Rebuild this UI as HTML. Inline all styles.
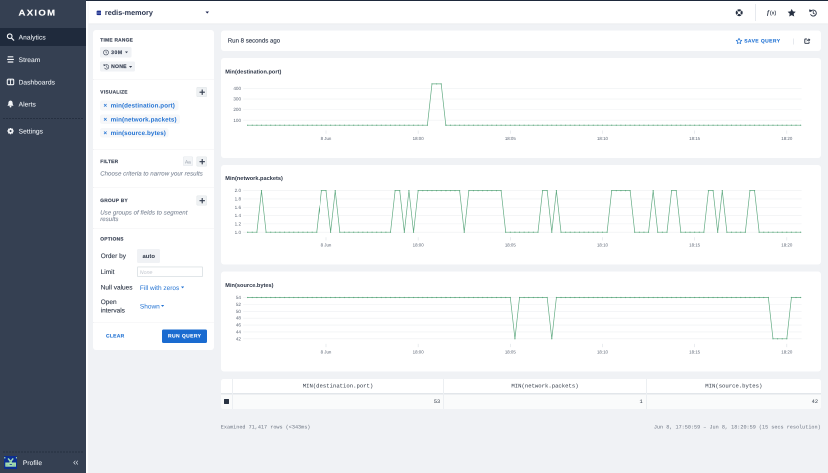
<!DOCTYPE html>
<html lang="en"><head><meta charset="utf-8"><title>Axiom - Analytics</title>
<style>
html,body{margin:0;padding:0}
body{width:828px;height:473px;position:relative;overflow:hidden;background:#f0f2f5;font-family:"Liberation Sans",Arial,sans-serif;-webkit-font-smoothing:antialiased;text-rendering:geometricPrecision}
.b{position:absolute;display:block;box-sizing:border-box}
.t{position:absolute;white-space:nowrap;line-height:1;display:block}
#w{position:absolute;left:0;top:0;width:828px;height:473px;zoom:2;transform:scale(0.5);transform-origin:0 0;will-change:transform}
</style></head><body><div id="w">
<div class="b" style="left:0.00px;top:0.00px;width:86.00px;height:473.00px;background:#354052;border-radius:0px;"></div>
<div class="b" style="left:0.00px;top:28.00px;width:86.00px;height:18.00px;background:#1f2a3c;border-radius:0px;"></div>
<span class="t" style="top:9.03px;font-size:8.3px;font-weight:700;color:#ffffff;font-family:'Liberation Sans',Arial,sans-serif;letter-spacing:1.15px;left:18.30px;transform:scaleX(1.15);transform-origin:0 50%;-webkit-text-stroke:0.15px #fff;">AXIOM</span>
<span class="t" style="top:34.00px;font-size:6.6px;font-weight:400;color:#e6eaef;font-family:'Liberation Sans',Arial,sans-serif;letter-spacing:0.08px;left:18.60px;-webkit-text-stroke:0.08px #e6eaef;">Analytics</span>
<span class="t" style="top:56.30px;font-size:6.6px;font-weight:400;color:#e6eaef;font-family:'Liberation Sans',Arial,sans-serif;letter-spacing:0.08px;left:18.60px;-webkit-text-stroke:0.08px #e6eaef;">Stream</span>
<span class="t" style="top:78.90px;font-size:6.6px;font-weight:400;color:#e6eaef;font-family:'Liberation Sans',Arial,sans-serif;letter-spacing:0.08px;left:18.60px;-webkit-text-stroke:0.08px #e6eaef;">Dashboards</span>
<span class="t" style="top:101.20px;font-size:6.6px;font-weight:400;color:#e6eaef;font-family:'Liberation Sans',Arial,sans-serif;letter-spacing:0.08px;left:18.60px;-webkit-text-stroke:0.08px #e6eaef;">Alerts</span>
<span class="t" style="top:128.20px;font-size:6.6px;font-weight:400;color:#e6eaef;font-family:'Liberation Sans',Arial,sans-serif;letter-spacing:0.08px;left:18.60px;-webkit-text-stroke:0.08px #e6eaef;">Settings</span>
<svg class="b" style="left:6.50px;top:33.00px" width="8" height="8" viewBox="0 0 8 8"><circle cx="3.2" cy="3.2" r="2.3" fill="none" stroke="#f2f4f7" stroke-width="1.1"/><path d="M4.9 4.9L7.2 7.2" stroke="#f2f4f7" stroke-width="1.2" stroke-linecap="round"/></svg>
<svg class="b" style="left:6.50px;top:55.30px" width="8" height="8" viewBox="0 0 8 8"><path d="M1.2 1.3H6.8M0.6 3.9H7.4M1.2 6.5H6.8" stroke="#f2f4f7" stroke-width="1.15"/></svg>
<svg class="b" style="left:6.50px;top:77.90px" width="8" height="8" viewBox="0 0 8 8"><rect x="0.8" y="1.2" width="6.4" height="5.5" rx="1" fill="none" stroke="#f2f4f7" stroke-width="1.05"/><path d="M4 1.2V6.7" stroke="#f2f4f7" stroke-width="0.9"/><path d="M0.8 2.2H7.2" stroke="#f2f4f7" stroke-width="0.5" opacity="0.6"/></svg>
<svg class="b" style="left:6.50px;top:100.20px" width="8" height="8" viewBox="0 0 8 8"><path d="M4 0.6C2.5 0.6 1.9 1.8 1.9 3.1C1.9 4.6 1.2 5.2 0.9 5.7H7.1C6.8 5.2 6.1 4.6 6.1 3.1C6.1 1.8 5.5 0.6 4 0.6Z" fill="#f2f4f7"/><circle cx="4" cy="6.6" r="0.9" fill="#f2f4f7"/></svg>
<svg class="b" style="left:7.00px;top:127.70px" width="7.1" height="7.1" viewBox="0 0 8 8"><rect x="3.15" y="0.45" width="1.7" height="7.1" rx="0.35" transform="rotate(0 4 4)" fill="#f2f4f7"/><rect x="3.15" y="0.45" width="1.7" height="7.1" rx="0.35" transform="rotate(45 4 4)" fill="#f2f4f7"/><rect x="3.15" y="0.45" width="1.7" height="7.1" rx="0.35" transform="rotate(90 4 4)" fill="#f2f4f7"/><rect x="3.15" y="0.45" width="1.7" height="7.1" rx="0.35" transform="rotate(135 4 4)" fill="#f2f4f7"/><circle cx="4" cy="4" r="2.85" fill="#f2f4f7"/><circle cx="4" cy="4" r="1.2" fill="#354052"/></svg>
<div class="b" style="left:3px;top:117.9px;width:80px;height:1px;background:repeating-linear-gradient(90deg,#182130 0,#182130 0.75px,transparent 0.75px,transparent 1.5px)"></div>
<div class="b" style="left:3px;top:451.5px;width:80px;height:1px;background:repeating-linear-gradient(90deg,#182130 0,#182130 0.75px,transparent 0.75px,transparent 1.5px)"></div>
<svg class="b" style="left:3.90px;top:455.90px" width="13.3" height="13" viewBox="0 0 13.3 13"><rect width="13.3" height="13" rx="0.7" fill="#0d2f91"/><rect x="0.1" y="1.1" width="1.3" height="1.3" fill="#a6ddb0"/><rect x="11.9" y="1.1" width="1.3" height="1.3" fill="#a6ddb0"/><path d="M4.1 2.4L6.3 5.2M9.2 2.4L7.0 5.2" stroke="#a6ddb0" stroke-width="1.5"/><rect x="5.5" y="4.4" width="2.3" height="2.6" fill="#a6ddb0"/><rect x="1.3" y="6.5" width="10.7" height="4.2" fill="#a6ddb0"/><rect x="5.6" y="8.2" width="2.5" height="0.8" rx="0.3" fill="#0d2f91"/><path d="M2.3 8.2H4.6M8.9 8.2H11.2M2.3 9.4H4.6M8.9 9.4H11.2" stroke="#6fb58c" stroke-width="0.5" stroke-dasharray="0.6 0.5"/><rect x="6.3" y="5.2" width="0.7" height="0.7" fill="#5fae86"/></svg>
<span class="t" style="top:459.30px;font-size:6.6px;font-weight:400;color:#e6eaef;font-family:'Liberation Sans',Arial,sans-serif;letter-spacing:0.08px;left:22.90px;-webkit-text-stroke:0.08px #e6eaef;">Profile</span>
<svg class="b" style="left:72.90px;top:460.00px" width="6" height="5.4" viewBox="0 0 6 5.4"><path d="M2.4 0.7L0.7 2.6L2.4 4.5M4.9 0.7L3.2 2.6L4.9 4.5" fill="none" stroke="#d5dbe3" stroke-width="0.7"/></svg>
<div class="b" style="left:86.00px;top:0.00px;width:742.00px;height:1.00px;background:#1f2a3c;border-radius:0px;"></div>
<div class="b" style="left:86.00px;top:1.00px;width:742.00px;height:22.60px;background:#ffffff;border-radius:0px;box-shadow:0 0.5px 1px rgba(0,0,0,0.06);"></div>
<div class="b" style="left:86px;top:1px;width:2.6px;height:472px;background:linear-gradient(90deg,#ffffff 0,#ffffff 55%,#f0f2f5 100%)"></div>
<svg class="b" style="left:96.40px;top:10.50px" width="4.8" height="4.8" viewBox="0 0 4.8 4.8"><rect x="0.1" y="0.1" width="4.6" height="4.5" rx="1" fill="#1c2f8c"/><path d="M0.1 1.7H4.7M0.1 3.1H4.7" stroke="#8f9bd0" stroke-width="0.45"/></svg>
<span class="t" style="top:9.51px;font-size:7.25px;font-weight:700;color:#2a3550;font-family:'Liberation Sans',Arial,sans-serif;left:104.90px;">redis-memory</span>
<svg class="b" style="left:205.25px;top:11.35px" width="3.5" height="2.275" viewBox="0 0 3.5 2.275"><path d="M0 0H3.5L1.75 2.1Z" fill="#1c2450"/></svg>
<svg class="b" style="left:735.70px;top:9.00px" width="7.4" height="7.4" viewBox="0 0 7.4 7.4"><circle cx="3.7" cy="3.7" r="2.45" fill="none" stroke="#263042" stroke-width="2.1"/><path d="M1.2 1.2L2.6 2.6M6.2 1.2L4.8 2.6M1.2 6.2L2.6 4.8M6.2 6.2L4.8 4.8" stroke="#fff" stroke-width="0.75"/></svg>
<div class="b" style="left:755.20px;top:4.00px;width:0.70px;height:17.00px;background:#e6e9ee;border-radius:0px;"></div>
<span class="t" style="left:767px;top:9.3px;font-size:6.4px;color:#263042;font-family:'Liberation Serif',serif;font-style:italic;font-weight:700">f</span>
<span class="t" style="top:10.68px;font-size:5.3px;font-weight:400;color:#263042;font-family:'Liberation Sans',Arial,sans-serif;letter-spacing:0.1px;left:769.90px;-webkit-text-stroke:0.12px #263042;">(x)</span>
<svg class="b" style="left:787.50px;top:8.40px" width="8.4" height="8.4" viewBox="0 0 8 8"><path d="M4 0.3L5.15 2.75L7.85 3.1L5.85 4.95L6.4 7.6L4 6.3L1.6 7.6L2.15 4.95L0.15 3.1L2.85 2.75Z" fill="#263042"/></svg>
<svg class="b" style="left:808.30px;top:8.30px" width="8.6" height="8.6" viewBox="0 0 10 10"><path d="M2.63 3.45A3.5 3.5 0 1 1 2.57 7.05" fill="none" stroke="#263042" stroke-width="1.1" stroke-linecap="round"/><path d="M0.6 1.2L3.7 1.7L1.3 4.3Z" fill="#263042"/><path d="M5.5 3.3V5.4L6.9 6.3" fill="none" stroke="#263042" stroke-width="0.935" stroke-linecap="round"/></svg>
<div class="b" style="left:93.10px;top:30.00px;width:120.80px;height:319.90px;background:#ffffff;border-radius:3px;"></div>
<span class="t" style="top:38.10px;font-size:4.8px;font-weight:700;color:#3a4355;font-family:'Liberation Sans',Arial,sans-serif;letter-spacing:0.27px;left:100.30px;-webkit-text-stroke:0.14px #3a4355;">TIME RANGE</span>
<div class="b" style="left:100.10px;top:46.90px;width:31.40px;height:10.80px;background:#f0f2f5;border-radius:1.6px;"></div>
<svg class="b" style="left:102.90px;top:49.40px" width="6" height="6" viewBox="0 0 6 6"><circle cx="3" cy="3" r="2.45" fill="none" stroke="#3a4355" stroke-width="0.6"/><path d="M3 1.6V3.1L3.9 3.7" fill="none" stroke="#3a4355" stroke-width="0.55"/></svg>
<span class="t" style="top:50.35px;font-size:5.1px;font-weight:700;color:#3a4355;font-family:'Liberation Sans',Arial,sans-serif;letter-spacing:0.55px;left:111.10px;-webkit-text-stroke:0.14px #3a4355;">30M</span>
<svg class="b" style="left:125.00px;top:51.60px" width="3.0" height="1.9500000000000002" viewBox="0 0 3.0 1.9500000000000002"><path d="M0 0H3.0L1.5 1.7999999999999998Z" fill="#3a4355"/></svg>
<div class="b" style="left:100.10px;top:61.70px;width:34.90px;height:9.80px;background:#f0f2f5;border-radius:1.6px;"></div>
<svg class="b" style="left:102.90px;top:63.50px" width="6.4" height="6.4" viewBox="0 0 10 10"><path d="M2.63 3.45A3.5 3.5 0 1 1 2.57 7.05" fill="none" stroke="#3a4355" stroke-width="0.95" stroke-linecap="round"/><path d="M0.6 1.2L3.7 1.7L1.3 4.3Z" fill="#3a4355"/><path d="M5.5 3.3V5.4L6.9 6.3" fill="none" stroke="#3a4355" stroke-width="0.8075" stroke-linecap="round"/></svg>
<span class="t" style="top:64.65px;font-size:5.1px;font-weight:700;color:#3a4355;font-family:'Liberation Sans',Arial,sans-serif;letter-spacing:0.25px;left:111.10px;-webkit-text-stroke:0.14px #3a4355;">NONE</span>
<svg class="b" style="left:129.00px;top:65.94px" width="3.2" height="2.08" viewBox="0 0 3.2 2.08"><path d="M0 0H3.2L1.6 1.92Z" fill="#3a4355"/></svg>
<div class="b" style="left:93.1px;top:78.80px;width:120.8px;border-top:0.8px dotted #e3e6ea"></div>
<span class="t" style="top:89.80px;font-size:4.8px;font-weight:700;color:#3a4355;font-family:'Liberation Sans',Arial,sans-serif;letter-spacing:0.27px;left:100.30px;-webkit-text-stroke:0.14px #3a4355;">VISUALIZE</span>
<div class="b" style="left:196.30px;top:86.80px;width:10.60px;height:10.20px;background:#eef1f3;border-radius:1.6px;box-shadow:inset 0 0 0 0.5px #e3e7ea;"></div>
<svg class="b" style="left:199.00px;top:88.90px" width="6.4" height="6.4" viewBox="0 0 6.4 6.4"><path d="M3.2 0.5V5.9M0.5 3.2H5.9" stroke="#fff" stroke-width="2.2" stroke-linecap="round" opacity="0.55"/><path d="M3.2 0.5V5.9M0.5 3.2H5.9" stroke="#333d4f" stroke-width="1.15"/></svg>
<div class="b" style="left:100.00px;top:100.70px;width:78.40px;height:9.60px;background:#f6f7f9;border-radius:2.5px;"></div>
<svg class="b" style="left:103.30px;top:103.70px" width="3.6" height="3.6" viewBox="0 0 3.6 3.6"><path d="M0.5 0.5L3.1 3.1M3.1 0.5L0.5 3.1" stroke="#2474d4" stroke-width="0.7"/></svg>
<span class="t" style="top:102.69px;font-size:6.25px;font-weight:700;color:#2474d4;font-family:'Liberation Sans',Arial,sans-serif;letter-spacing:0.09px;left:110.60px;">min(destination.port)</span>
<div class="b" style="left:100.00px;top:114.30px;width:79.80px;height:9.60px;background:#f6f7f9;border-radius:2.5px;"></div>
<svg class="b" style="left:103.30px;top:117.30px" width="3.6" height="3.6" viewBox="0 0 3.6 3.6"><path d="M0.5 0.5L3.1 3.1M3.1 0.5L0.5 3.1" stroke="#2474d4" stroke-width="0.7"/></svg>
<span class="t" style="top:116.29px;font-size:6.25px;font-weight:700;color:#2474d4;font-family:'Liberation Sans',Arial,sans-serif;letter-spacing:0.09px;left:110.60px;">min(network.packets)</span>
<div class="b" style="left:100.00px;top:128.00px;width:68.50px;height:9.60px;background:#f6f7f9;border-radius:2.5px;"></div>
<svg class="b" style="left:103.30px;top:131.00px" width="3.6" height="3.6" viewBox="0 0 3.6 3.6"><path d="M0.5 0.5L3.1 3.1M3.1 0.5L0.5 3.1" stroke="#2474d4" stroke-width="0.7"/></svg>
<span class="t" style="top:129.99px;font-size:6.25px;font-weight:700;color:#2474d4;font-family:'Liberation Sans',Arial,sans-serif;letter-spacing:0.09px;left:110.60px;">min(source.bytes)</span>
<div class="b" style="left:93.1px;top:148.80px;width:120.8px;border-top:0.8px dotted #e3e6ea"></div>
<span class="t" style="top:159.40px;font-size:4.8px;font-weight:700;color:#3a4355;font-family:'Liberation Sans',Arial,sans-serif;letter-spacing:0.27px;left:100.30px;-webkit-text-stroke:0.14px #3a4355;">FILTER</span>
<div class="b" style="left:183.00px;top:156.40px;width:9.80px;height:9.80px;background:#f3f5f7;border-radius:1.5px;box-shadow:inset 0 0 0 0.5px #e6e9ed;"></div>
<span class="t" style="top:159.41px;font-size:4.7px;font-weight:400;color:#8d95a3;font-family:'Liberation Sans',Arial,sans-serif;left:187.90px;transform:translateX(-50%);">Aa</span>
<div class="b" style="left:196.30px;top:156.30px;width:10.60px;height:10.20px;background:#eef1f3;border-radius:1.6px;box-shadow:inset 0 0 0 0.5px #e3e7ea;"></div>
<svg class="b" style="left:199.00px;top:158.40px" width="6.4" height="6.4" viewBox="0 0 6.4 6.4"><path d="M3.2 0.5V5.9M0.5 3.2H5.9" stroke="#fff" stroke-width="2.2" stroke-linecap="round" opacity="0.55"/><path d="M3.2 0.5V5.9M0.5 3.2H5.9" stroke="#333d4f" stroke-width="1.15"/></svg>
<span class="t" style="top:170.37px;font-size:6.1px;font-weight:400;color:#7c8696;font-family:'Liberation Sans',Arial,sans-serif;letter-spacing:0.035px;font-style:italic;left:100.20px;-webkit-text-stroke:0.08px #7c8696;">Choose criteria to narrow your results</span>
<div class="b" style="left:93.1px;top:187.30px;width:120.8px;border-top:0.8px dotted #e3e6ea"></div>
<span class="t" style="top:198.70px;font-size:4.8px;font-weight:700;color:#3a4355;font-family:'Liberation Sans',Arial,sans-serif;letter-spacing:0.27px;left:100.30px;-webkit-text-stroke:0.14px #3a4355;">GROUP BY</span>
<div class="b" style="left:196.30px;top:195.50px;width:10.60px;height:10.20px;background:#eef1f3;border-radius:1.6px;box-shadow:inset 0 0 0 0.5px #e3e7ea;"></div>
<svg class="b" style="left:199.00px;top:197.60px" width="6.4" height="6.4" viewBox="0 0 6.4 6.4"><path d="M3.2 0.5V5.9M0.5 3.2H5.9" stroke="#fff" stroke-width="2.2" stroke-linecap="round" opacity="0.55"/><path d="M3.2 0.5V5.9M0.5 3.2H5.9" stroke="#333d4f" stroke-width="1.15"/></svg>
<span class="t" style="top:209.57px;font-size:6.1px;font-weight:400;color:#7c8696;font-family:'Liberation Sans',Arial,sans-serif;letter-spacing:0.05px;font-style:italic;left:100.20px;-webkit-text-stroke:0.08px #7c8696;">Use groups of fields to segment</span>
<span class="t" style="top:215.77px;font-size:6.1px;font-weight:400;color:#7c8696;font-family:'Liberation Sans',Arial,sans-serif;letter-spacing:0.05px;font-style:italic;left:100.20px;-webkit-text-stroke:0.08px #7c8696;">results</span>
<div class="b" style="left:93.1px;top:228.20px;width:120.8px;border-top:0.8px dotted #e3e6ea"></div>
<span class="t" style="top:237.10px;font-size:4.8px;font-weight:700;color:#3a4355;font-family:'Liberation Sans',Arial,sans-serif;letter-spacing:0.27px;left:100.30px;-webkit-text-stroke:0.14px #3a4355;">OPTIONS</span>
<span class="t" style="top:252.25px;font-size:6.5px;font-weight:400;color:#2f3848;font-family:'Liberation Sans',Arial,sans-serif;left:100.70px;-webkit-text-stroke:0.1px #2f3848;">Order by</span>
<div class="b" style="left:137.00px;top:248.80px;width:23.10px;height:14.00px;background:#f0f2f5;border-radius:1.6px;"></div>
<span class="t" style="top:253.45px;font-size:5.9px;font-weight:700;color:#2f3848;font-family:'Liberation Sans',Arial,sans-serif;left:148.70px;transform:translateX(-50%);">auto</span>
<span class="t" style="top:268.36px;font-size:6.5px;font-weight:400;color:#2f3848;font-family:'Liberation Sans',Arial,sans-serif;left:100.70px;-webkit-text-stroke:0.1px #2f3848;">Limit</span>
<div class="b" style="left:137.00px;top:266.40px;width:65.90px;height:10.40px;background:#ffffff;border-radius:1px;box-shadow:inset 0 0 0 0.9px #dde3e6;"></div>
<span class="t" style="top:269.79px;font-size:5.3px;font-weight:400;color:#c3c8d0;font-family:'Liberation Sans',Arial,sans-serif;font-style:italic;left:139.80px;">None</span>
<span class="t" style="top:284.16px;font-size:6.5px;font-weight:400;color:#2f3848;font-family:'Liberation Sans',Arial,sans-serif;left:100.70px;-webkit-text-stroke:0.1px #2f3848;">Null values</span>
<span class="t" style="top:284.25px;font-size:6.5px;font-weight:400;color:#2474d4;font-family:'Liberation Sans',Arial,sans-serif;left:139.90px;">Fill with zeros</span>
<svg class="b" style="left:181.00px;top:286.54px" width="3.2" height="2.08" viewBox="0 0 3.2 2.08"><path d="M0 0H3.2L1.6 1.92Z" fill="#2474d4"/></svg>
<span class="t" style="top:298.56px;font-size:6.5px;font-weight:400;color:#2f3848;font-family:'Liberation Sans',Arial,sans-serif;left:100.70px;-webkit-text-stroke:0.1px #2f3848;">Open</span>
<span class="t" style="top:306.86px;font-size:6.5px;font-weight:400;color:#2f3848;font-family:'Liberation Sans',Arial,sans-serif;left:100.70px;-webkit-text-stroke:0.1px #2f3848;">intervals</span>
<span class="t" style="top:302.95px;font-size:6.5px;font-weight:400;color:#2474d4;font-family:'Liberation Sans',Arial,sans-serif;left:139.90px;">Shown</span>
<svg class="b" style="left:160.80px;top:305.24px" width="3.2" height="2.08" viewBox="0 0 3.2 2.08"><path d="M0 0H3.2L1.6 1.92Z" fill="#2474d4"/></svg>
<div class="b" style="left:93.1px;top:322.10px;width:120.8px;border-top:0.8px dotted #e3e6ea"></div>
<span class="t" style="top:334.00px;font-size:5.0px;font-weight:700;color:#2474d4;font-family:'Liberation Sans',Arial,sans-serif;letter-spacing:0.25px;left:106.00px;-webkit-text-stroke:0.1px #2474d4;">CLEAR</span>
<div class="b" style="left:161.80px;top:329.30px;width:45.20px;height:13.50px;background:#1a6bd0;border-radius:1.5px;"></div>
<span class="t" style="top:334.00px;font-size:5.0px;font-weight:700;color:#ffffff;font-family:'Liberation Sans',Arial,sans-serif;letter-spacing:0.4px;left:168.00px;-webkit-text-stroke:0.1px #fff;">RUN QUERY</span>
<div class="b" style="left:221.00px;top:30.30px;width:600.00px;height:20.50px;background:#ffffff;border-radius:3px;"></div>
<span class="t" style="top:37.58px;font-size:6.08px;font-weight:400;color:#394355;font-family:'Liberation Sans',Arial,sans-serif;left:227.80px;-webkit-text-stroke:0.15px #394355;">Run 8 seconds ago</span>
<svg class="b" style="left:735.40px;top:37.50px" width="7" height="7" viewBox="0 0 8 8"><path d="M4 0.9L4.95 2.95L7.2 3.25L5.55 4.8L6 7L4 5.95L2 7L2.45 4.8L0.8 3.25L3.05 2.95Z" fill="none" stroke="#2474d4" stroke-width="0.8" stroke-linejoin="round"/></svg>
<span class="t" style="top:38.90px;font-size:5.0px;font-weight:700;color:#2474d4;font-family:'Liberation Sans',Arial,sans-serif;letter-spacing:0.4px;left:744.20px;-webkit-text-stroke:0.1px #2474d4;">SAVE QUERY</span>
<div class="b" style="left:793.20px;top:38.40px;width:0.60px;height:6.20px;background:#e6e9ee;border-radius:0px;"></div>
<svg class="b" style="left:803.80px;top:37.70px" width="6.6" height="6.6" viewBox="0 0 6.6 6.6"><path d="M2.9 1.5H1.3Q0.8 1.5 0.8 2V5.3Q0.8 5.8 1.3 5.8H4.6Q5.1 5.8 5.1 5.3V4.2" fill="none" stroke="#263042" stroke-width="0.9"/><path d="M2.6 4.3C2.6 2.6 3.4 1.9 4.6 1.9V0.7L6.4 2.4L4.6 4.1V2.9C3.7 2.9 3.1 3.2 2.6 4.3Z" fill="#263042"/></svg>
<div class="b" style="left:221.00px;top:58.10px;width:600.00px;height:99.80px;background:#ffffff;border-radius:3px;"></div>
<span class="t" style="top:69.53px;font-size:5.6px;font-weight:700;color:#2c3546;font-family:'Liberation Sans',Arial,sans-serif;letter-spacing:0.02px;left:225.30px;">Min(destination.port)</span>
<svg class="b" style="left:0;top:0" width="828" height="473" viewBox="0 0 828 473" font-family="Liberation Sans,Arial,sans-serif"><path d="M243.2 88.45H801.6" stroke="#eef0f2" stroke-width="0.6"/><text x="241" y="90.00" text-anchor="end" font-size="4.6" fill="#5d6675">400</text><path d="M243.2 99.04H801.6" stroke="#eef0f2" stroke-width="0.6"/><text x="241" y="100.59" text-anchor="end" font-size="4.6" fill="#5d6675">300</text><path d="M243.2 109.63H801.6" stroke="#eef0f2" stroke-width="0.6"/><text x="241" y="111.18" text-anchor="end" font-size="4.6" fill="#5d6675">200</text><path d="M243.2 120.22H801.6" stroke="#eef0f2" stroke-width="0.6"/><text x="241" y="121.77" text-anchor="end" font-size="4.6" fill="#5d6675">100</text><path d="M326.0 130.50V133.70" stroke="#dde1e6" stroke-width="0.6"/><text x="326.0" y="140.00" text-anchor="middle" font-size="4.4" fill="#5d6675">8 Jun</text><path d="M418.16 130.50V133.70" stroke="#dde1e6" stroke-width="0.6"/><text x="418.16" y="140.00" text-anchor="middle" font-size="4.4" fill="#5d6675">18:00</text><path d="M510.32 130.50V133.70" stroke="#dde1e6" stroke-width="0.6"/><text x="510.32" y="140.00" text-anchor="middle" font-size="4.4" fill="#5d6675">18:05</text><path d="M602.48 130.50V133.70" stroke="#dde1e6" stroke-width="0.6"/><text x="602.48" y="140.00" text-anchor="middle" font-size="4.4" fill="#5d6675">18:10</text><path d="M694.64 130.50V133.70" stroke="#dde1e6" stroke-width="0.6"/><text x="694.64" y="140.00" text-anchor="middle" font-size="4.4" fill="#5d6675">18:15</text><path d="M786.8 130.50V133.70" stroke="#dde1e6" stroke-width="0.6"/><text x="786.8" y="140.00" text-anchor="middle" font-size="4.4" fill="#5d6675">18:20</text><polyline points="247.66,125.20 252.27,125.20 256.88,125.20 261.49,125.20 266.10,125.20 270.70,125.20 275.31,125.20 279.92,125.20 284.53,125.20 289.14,125.20 293.74,125.20 298.35,125.20 302.96,125.20 307.57,125.20 312.18,125.20 316.78,125.20 321.39,125.20 326.00,125.20 330.61,125.20 335.22,125.20 339.82,125.20 344.43,125.20 349.04,125.20 353.65,125.20 358.26,125.20 362.86,125.20 367.47,125.20 372.08,125.20 376.69,125.20 381.30,125.20 385.90,125.20 390.51,125.20 395.12,125.20 399.73,125.20 404.34,125.20 408.94,125.20 413.55,125.20 418.16,125.20 422.77,125.20 427.38,125.20 431.98,83.90 436.59,83.90 441.20,83.90 445.81,125.20 450.42,125.20 455.02,125.20 459.63,125.20 464.24,125.20 468.85,125.20 473.46,125.20 478.06,125.20 482.67,125.20 487.28,125.20 491.89,125.20 496.50,125.20 501.10,125.20 505.71,125.20 510.32,125.20 514.93,125.20 519.54,125.20 524.14,125.20 528.75,125.20 533.36,125.20 537.97,125.20 542.58,125.20 547.18,125.20 551.79,125.20 556.40,125.20 561.01,125.20 565.62,125.20 570.22,125.20 574.83,125.20 579.44,125.20 584.05,125.20 588.66,125.20 593.26,125.20 597.87,125.20 602.48,125.20 607.09,125.20 611.70,125.20 616.30,125.20 620.91,125.20 625.52,125.20 630.13,125.20 634.74,125.20 639.34,125.20 643.95,125.20 648.56,125.20 653.17,125.20 657.78,125.20 662.38,125.20 666.99,125.20 671.60,125.20 676.21,125.20 680.82,125.20 685.42,125.20 690.03,125.20 694.64,125.20 699.25,125.20 703.86,125.20 708.46,125.20 713.07,125.20 717.68,125.20 722.29,125.20 726.90,125.20 731.50,125.20 736.11,125.20 740.72,125.20 745.33,125.20 749.94,125.20 754.54,125.20 759.15,125.20 763.76,125.20 768.37,125.20 772.98,125.20 777.58,125.20 782.19,125.20 786.80,125.20 791.41,125.20 796.02,125.20 800.62,125.20" fill="none" stroke="#ffffff" stroke-width="1.7" stroke-linejoin="round"/><polyline points="247.66,125.20 252.27,125.20 256.88,125.20 261.49,125.20 266.10,125.20 270.70,125.20 275.31,125.20 279.92,125.20 284.53,125.20 289.14,125.20 293.74,125.20 298.35,125.20 302.96,125.20 307.57,125.20 312.18,125.20 316.78,125.20 321.39,125.20 326.00,125.20 330.61,125.20 335.22,125.20 339.82,125.20 344.43,125.20 349.04,125.20 353.65,125.20 358.26,125.20 362.86,125.20 367.47,125.20 372.08,125.20 376.69,125.20 381.30,125.20 385.90,125.20 390.51,125.20 395.12,125.20 399.73,125.20 404.34,125.20 408.94,125.20 413.55,125.20 418.16,125.20 422.77,125.20 427.38,125.20 431.98,83.90 436.59,83.90 441.20,83.90 445.81,125.20 450.42,125.20 455.02,125.20 459.63,125.20 464.24,125.20 468.85,125.20 473.46,125.20 478.06,125.20 482.67,125.20 487.28,125.20 491.89,125.20 496.50,125.20 501.10,125.20 505.71,125.20 510.32,125.20 514.93,125.20 519.54,125.20 524.14,125.20 528.75,125.20 533.36,125.20 537.97,125.20 542.58,125.20 547.18,125.20 551.79,125.20 556.40,125.20 561.01,125.20 565.62,125.20 570.22,125.20 574.83,125.20 579.44,125.20 584.05,125.20 588.66,125.20 593.26,125.20 597.87,125.20 602.48,125.20 607.09,125.20 611.70,125.20 616.30,125.20 620.91,125.20 625.52,125.20 630.13,125.20 634.74,125.20 639.34,125.20 643.95,125.20 648.56,125.20 653.17,125.20 657.78,125.20 662.38,125.20 666.99,125.20 671.60,125.20 676.21,125.20 680.82,125.20 685.42,125.20 690.03,125.20 694.64,125.20 699.25,125.20 703.86,125.20 708.46,125.20 713.07,125.20 717.68,125.20 722.29,125.20 726.90,125.20 731.50,125.20 736.11,125.20 740.72,125.20 745.33,125.20 749.94,125.20 754.54,125.20 759.15,125.20 763.76,125.20 768.37,125.20 772.98,125.20 777.58,125.20 782.19,125.20 786.80,125.20 791.41,125.20 796.02,125.20 800.62,125.20" fill="none" stroke="#5fa980" stroke-width="0.68" stroke-linejoin="round"/><circle cx="247.66" cy="125.20" r="0.62" fill="#5fa980"/><circle cx="252.27" cy="125.20" r="0.62" fill="#5fa980"/><circle cx="256.88" cy="125.20" r="0.62" fill="#5fa980"/><circle cx="261.49" cy="125.20" r="0.62" fill="#5fa980"/><circle cx="266.10" cy="125.20" r="0.62" fill="#5fa980"/><circle cx="270.70" cy="125.20" r="0.62" fill="#5fa980"/><circle cx="275.31" cy="125.20" r="0.62" fill="#5fa980"/><circle cx="279.92" cy="125.20" r="0.62" fill="#5fa980"/><circle cx="284.53" cy="125.20" r="0.62" fill="#5fa980"/><circle cx="289.14" cy="125.20" r="0.62" fill="#5fa980"/><circle cx="293.74" cy="125.20" r="0.62" fill="#5fa980"/><circle cx="298.35" cy="125.20" r="0.62" fill="#5fa980"/><circle cx="302.96" cy="125.20" r="0.62" fill="#5fa980"/><circle cx="307.57" cy="125.20" r="0.62" fill="#5fa980"/><circle cx="312.18" cy="125.20" r="0.62" fill="#5fa980"/><circle cx="316.78" cy="125.20" r="0.62" fill="#5fa980"/><circle cx="321.39" cy="125.20" r="0.62" fill="#5fa980"/><circle cx="326.00" cy="125.20" r="0.62" fill="#5fa980"/><circle cx="330.61" cy="125.20" r="0.62" fill="#5fa980"/><circle cx="335.22" cy="125.20" r="0.62" fill="#5fa980"/><circle cx="339.82" cy="125.20" r="0.62" fill="#5fa980"/><circle cx="344.43" cy="125.20" r="0.62" fill="#5fa980"/><circle cx="349.04" cy="125.20" r="0.62" fill="#5fa980"/><circle cx="353.65" cy="125.20" r="0.62" fill="#5fa980"/><circle cx="358.26" cy="125.20" r="0.62" fill="#5fa980"/><circle cx="362.86" cy="125.20" r="0.62" fill="#5fa980"/><circle cx="367.47" cy="125.20" r="0.62" fill="#5fa980"/><circle cx="372.08" cy="125.20" r="0.62" fill="#5fa980"/><circle cx="376.69" cy="125.20" r="0.62" fill="#5fa980"/><circle cx="381.30" cy="125.20" r="0.62" fill="#5fa980"/><circle cx="385.90" cy="125.20" r="0.62" fill="#5fa980"/><circle cx="390.51" cy="125.20" r="0.62" fill="#5fa980"/><circle cx="395.12" cy="125.20" r="0.62" fill="#5fa980"/><circle cx="399.73" cy="125.20" r="0.62" fill="#5fa980"/><circle cx="404.34" cy="125.20" r="0.62" fill="#5fa980"/><circle cx="408.94" cy="125.20" r="0.62" fill="#5fa980"/><circle cx="413.55" cy="125.20" r="0.62" fill="#5fa980"/><circle cx="418.16" cy="125.20" r="0.62" fill="#5fa980"/><circle cx="422.77" cy="125.20" r="0.62" fill="#5fa980"/><circle cx="427.38" cy="125.20" r="0.62" fill="#5fa980"/><circle cx="431.98" cy="83.90" r="0.62" fill="#5fa980"/><circle cx="436.59" cy="83.90" r="0.62" fill="#5fa980"/><circle cx="441.20" cy="83.90" r="0.62" fill="#5fa980"/><circle cx="445.81" cy="125.20" r="0.62" fill="#5fa980"/><circle cx="450.42" cy="125.20" r="0.62" fill="#5fa980"/><circle cx="455.02" cy="125.20" r="0.62" fill="#5fa980"/><circle cx="459.63" cy="125.20" r="0.62" fill="#5fa980"/><circle cx="464.24" cy="125.20" r="0.62" fill="#5fa980"/><circle cx="468.85" cy="125.20" r="0.62" fill="#5fa980"/><circle cx="473.46" cy="125.20" r="0.62" fill="#5fa980"/><circle cx="478.06" cy="125.20" r="0.62" fill="#5fa980"/><circle cx="482.67" cy="125.20" r="0.62" fill="#5fa980"/><circle cx="487.28" cy="125.20" r="0.62" fill="#5fa980"/><circle cx="491.89" cy="125.20" r="0.62" fill="#5fa980"/><circle cx="496.50" cy="125.20" r="0.62" fill="#5fa980"/><circle cx="501.10" cy="125.20" r="0.62" fill="#5fa980"/><circle cx="505.71" cy="125.20" r="0.62" fill="#5fa980"/><circle cx="510.32" cy="125.20" r="0.62" fill="#5fa980"/><circle cx="514.93" cy="125.20" r="0.62" fill="#5fa980"/><circle cx="519.54" cy="125.20" r="0.62" fill="#5fa980"/><circle cx="524.14" cy="125.20" r="0.62" fill="#5fa980"/><circle cx="528.75" cy="125.20" r="0.62" fill="#5fa980"/><circle cx="533.36" cy="125.20" r="0.62" fill="#5fa980"/><circle cx="537.97" cy="125.20" r="0.62" fill="#5fa980"/><circle cx="542.58" cy="125.20" r="0.62" fill="#5fa980"/><circle cx="547.18" cy="125.20" r="0.62" fill="#5fa980"/><circle cx="551.79" cy="125.20" r="0.62" fill="#5fa980"/><circle cx="556.40" cy="125.20" r="0.62" fill="#5fa980"/><circle cx="561.01" cy="125.20" r="0.62" fill="#5fa980"/><circle cx="565.62" cy="125.20" r="0.62" fill="#5fa980"/><circle cx="570.22" cy="125.20" r="0.62" fill="#5fa980"/><circle cx="574.83" cy="125.20" r="0.62" fill="#5fa980"/><circle cx="579.44" cy="125.20" r="0.62" fill="#5fa980"/><circle cx="584.05" cy="125.20" r="0.62" fill="#5fa980"/><circle cx="588.66" cy="125.20" r="0.62" fill="#5fa980"/><circle cx="593.26" cy="125.20" r="0.62" fill="#5fa980"/><circle cx="597.87" cy="125.20" r="0.62" fill="#5fa980"/><circle cx="602.48" cy="125.20" r="0.62" fill="#5fa980"/><circle cx="607.09" cy="125.20" r="0.62" fill="#5fa980"/><circle cx="611.70" cy="125.20" r="0.62" fill="#5fa980"/><circle cx="616.30" cy="125.20" r="0.62" fill="#5fa980"/><circle cx="620.91" cy="125.20" r="0.62" fill="#5fa980"/><circle cx="625.52" cy="125.20" r="0.62" fill="#5fa980"/><circle cx="630.13" cy="125.20" r="0.62" fill="#5fa980"/><circle cx="634.74" cy="125.20" r="0.62" fill="#5fa980"/><circle cx="639.34" cy="125.20" r="0.62" fill="#5fa980"/><circle cx="643.95" cy="125.20" r="0.62" fill="#5fa980"/><circle cx="648.56" cy="125.20" r="0.62" fill="#5fa980"/><circle cx="653.17" cy="125.20" r="0.62" fill="#5fa980"/><circle cx="657.78" cy="125.20" r="0.62" fill="#5fa980"/><circle cx="662.38" cy="125.20" r="0.62" fill="#5fa980"/><circle cx="666.99" cy="125.20" r="0.62" fill="#5fa980"/><circle cx="671.60" cy="125.20" r="0.62" fill="#5fa980"/><circle cx="676.21" cy="125.20" r="0.62" fill="#5fa980"/><circle cx="680.82" cy="125.20" r="0.62" fill="#5fa980"/><circle cx="685.42" cy="125.20" r="0.62" fill="#5fa980"/><circle cx="690.03" cy="125.20" r="0.62" fill="#5fa980"/><circle cx="694.64" cy="125.20" r="0.62" fill="#5fa980"/><circle cx="699.25" cy="125.20" r="0.62" fill="#5fa980"/><circle cx="703.86" cy="125.20" r="0.62" fill="#5fa980"/><circle cx="708.46" cy="125.20" r="0.62" fill="#5fa980"/><circle cx="713.07" cy="125.20" r="0.62" fill="#5fa980"/><circle cx="717.68" cy="125.20" r="0.62" fill="#5fa980"/><circle cx="722.29" cy="125.20" r="0.62" fill="#5fa980"/><circle cx="726.90" cy="125.20" r="0.62" fill="#5fa980"/><circle cx="731.50" cy="125.20" r="0.62" fill="#5fa980"/><circle cx="736.11" cy="125.20" r="0.62" fill="#5fa980"/><circle cx="740.72" cy="125.20" r="0.62" fill="#5fa980"/><circle cx="745.33" cy="125.20" r="0.62" fill="#5fa980"/><circle cx="749.94" cy="125.20" r="0.62" fill="#5fa980"/><circle cx="754.54" cy="125.20" r="0.62" fill="#5fa980"/><circle cx="759.15" cy="125.20" r="0.62" fill="#5fa980"/><circle cx="763.76" cy="125.20" r="0.62" fill="#5fa980"/><circle cx="768.37" cy="125.20" r="0.62" fill="#5fa980"/><circle cx="772.98" cy="125.20" r="0.62" fill="#5fa980"/><circle cx="777.58" cy="125.20" r="0.62" fill="#5fa980"/><circle cx="782.19" cy="125.20" r="0.62" fill="#5fa980"/><circle cx="786.80" cy="125.20" r="0.62" fill="#5fa980"/><circle cx="791.41" cy="125.20" r="0.62" fill="#5fa980"/><circle cx="796.02" cy="125.20" r="0.62" fill="#5fa980"/><circle cx="800.62" cy="125.20" r="0.62" fill="#5fa980"/></svg>
<div class="b" style="left:221.00px;top:164.80px;width:600.00px;height:99.80px;background:#ffffff;border-radius:3px;"></div>
<span class="t" style="top:176.23px;font-size:5.6px;font-weight:700;color:#2c3546;font-family:'Liberation Sans',Arial,sans-serif;letter-spacing:0.02px;left:225.30px;">Min(network.packets)</span>
<svg class="b" style="left:0;top:0" width="828" height="473" viewBox="0 0 828 473" font-family="Liberation Sans,Arial,sans-serif"><path d="M243.2 190.60H801.6" stroke="#eef0f2" stroke-width="0.6"/><text x="241" y="192.15" text-anchor="end" font-size="4.6" fill="#5d6675">2.0</text><path d="M243.2 198.92H801.6" stroke="#eef0f2" stroke-width="0.6"/><text x="241" y="200.47" text-anchor="end" font-size="4.6" fill="#5d6675">1.8</text><path d="M243.2 207.24H801.6" stroke="#eef0f2" stroke-width="0.6"/><text x="241" y="208.79" text-anchor="end" font-size="4.6" fill="#5d6675">1.6</text><path d="M243.2 215.56H801.6" stroke="#eef0f2" stroke-width="0.6"/><text x="241" y="217.11" text-anchor="end" font-size="4.6" fill="#5d6675">1.4</text><path d="M243.2 223.88H801.6" stroke="#eef0f2" stroke-width="0.6"/><text x="241" y="225.43" text-anchor="end" font-size="4.6" fill="#5d6675">1.2</text><path d="M243.2 232.20H801.6" stroke="#eef0f2" stroke-width="0.6"/><text x="241" y="233.75" text-anchor="end" font-size="4.6" fill="#5d6675">1.0</text><path d="M326.0 237.20V240.40" stroke="#dde1e6" stroke-width="0.6"/><text x="326.0" y="246.70" text-anchor="middle" font-size="4.4" fill="#5d6675">8 Jun</text><path d="M418.16 237.20V240.40" stroke="#dde1e6" stroke-width="0.6"/><text x="418.16" y="246.70" text-anchor="middle" font-size="4.4" fill="#5d6675">18:00</text><path d="M510.32 237.20V240.40" stroke="#dde1e6" stroke-width="0.6"/><text x="510.32" y="246.70" text-anchor="middle" font-size="4.4" fill="#5d6675">18:05</text><path d="M602.48 237.20V240.40" stroke="#dde1e6" stroke-width="0.6"/><text x="602.48" y="246.70" text-anchor="middle" font-size="4.4" fill="#5d6675">18:10</text><path d="M694.64 237.20V240.40" stroke="#dde1e6" stroke-width="0.6"/><text x="694.64" y="246.70" text-anchor="middle" font-size="4.4" fill="#5d6675">18:15</text><path d="M786.8 237.20V240.40" stroke="#dde1e6" stroke-width="0.6"/><text x="786.8" y="246.70" text-anchor="middle" font-size="4.4" fill="#5d6675">18:20</text><polyline points="247.66,232.20 252.27,232.20 256.88,232.20 261.49,190.60 266.10,232.20 270.70,232.20 275.31,232.20 279.92,232.20 284.53,232.20 289.14,232.20 293.74,232.20 298.35,232.20 302.96,232.20 307.57,232.20 312.18,232.20 316.78,232.20 321.39,190.60 326.00,190.60 330.61,232.20 335.22,190.60 339.82,232.20 344.43,232.20 349.04,232.20 353.65,232.20 358.26,232.20 362.86,232.20 367.47,232.20 372.08,232.20 376.69,232.20 381.30,232.20 385.90,232.20 390.51,232.20 395.12,190.60 399.73,190.60 404.34,232.20 408.94,190.60 413.55,232.20 418.16,190.60 422.77,190.60 427.38,190.60 431.98,190.60 436.59,190.60 441.20,190.60 445.81,190.60 450.42,190.60 455.02,190.60 459.63,190.60 464.24,232.20 468.85,190.60 473.46,190.60 478.06,190.60 482.67,190.60 487.28,190.60 491.89,190.60 496.50,190.60 501.10,190.60 505.71,232.20 510.32,232.20 514.93,232.20 519.54,232.20 524.14,232.20 528.75,232.20 533.36,232.20 537.97,232.20 542.58,190.60 547.18,190.60 551.79,232.20 556.40,190.60 561.01,232.20 565.62,232.20 570.22,232.20 574.83,232.20 579.44,232.20 584.05,232.20 588.66,232.20 593.26,232.20 597.87,232.20 602.48,232.20 607.09,232.20 611.70,190.60 616.30,190.60 620.91,190.60 625.52,190.60 630.13,190.60 634.74,232.20 639.34,232.20 643.95,232.20 648.56,232.20 653.17,190.60 657.78,232.20 662.38,232.20 666.99,232.20 671.60,190.60 676.21,190.60 680.82,232.20 685.42,232.20 690.03,232.20 694.64,232.20 699.25,232.20 703.86,232.20 708.46,190.60 713.07,190.60 717.68,232.20 722.29,190.60 726.90,232.20 731.50,232.20 736.11,232.20 740.72,232.20 745.33,232.20 749.94,190.60 754.54,190.60 759.15,232.20 763.76,232.20 768.37,232.20 772.98,232.20 777.58,232.20 782.19,232.20 786.80,232.20 791.41,232.20 796.02,232.20 800.62,232.20" fill="none" stroke="#ffffff" stroke-width="1.7" stroke-linejoin="round"/><polyline points="247.66,232.20 252.27,232.20 256.88,232.20 261.49,190.60 266.10,232.20 270.70,232.20 275.31,232.20 279.92,232.20 284.53,232.20 289.14,232.20 293.74,232.20 298.35,232.20 302.96,232.20 307.57,232.20 312.18,232.20 316.78,232.20 321.39,190.60 326.00,190.60 330.61,232.20 335.22,190.60 339.82,232.20 344.43,232.20 349.04,232.20 353.65,232.20 358.26,232.20 362.86,232.20 367.47,232.20 372.08,232.20 376.69,232.20 381.30,232.20 385.90,232.20 390.51,232.20 395.12,190.60 399.73,190.60 404.34,232.20 408.94,190.60 413.55,232.20 418.16,190.60 422.77,190.60 427.38,190.60 431.98,190.60 436.59,190.60 441.20,190.60 445.81,190.60 450.42,190.60 455.02,190.60 459.63,190.60 464.24,232.20 468.85,190.60 473.46,190.60 478.06,190.60 482.67,190.60 487.28,190.60 491.89,190.60 496.50,190.60 501.10,190.60 505.71,232.20 510.32,232.20 514.93,232.20 519.54,232.20 524.14,232.20 528.75,232.20 533.36,232.20 537.97,232.20 542.58,190.60 547.18,190.60 551.79,232.20 556.40,190.60 561.01,232.20 565.62,232.20 570.22,232.20 574.83,232.20 579.44,232.20 584.05,232.20 588.66,232.20 593.26,232.20 597.87,232.20 602.48,232.20 607.09,232.20 611.70,190.60 616.30,190.60 620.91,190.60 625.52,190.60 630.13,190.60 634.74,232.20 639.34,232.20 643.95,232.20 648.56,232.20 653.17,190.60 657.78,232.20 662.38,232.20 666.99,232.20 671.60,190.60 676.21,190.60 680.82,232.20 685.42,232.20 690.03,232.20 694.64,232.20 699.25,232.20 703.86,232.20 708.46,190.60 713.07,190.60 717.68,232.20 722.29,190.60 726.90,232.20 731.50,232.20 736.11,232.20 740.72,232.20 745.33,232.20 749.94,190.60 754.54,190.60 759.15,232.20 763.76,232.20 768.37,232.20 772.98,232.20 777.58,232.20 782.19,232.20 786.80,232.20 791.41,232.20 796.02,232.20 800.62,232.20" fill="none" stroke="#5fa980" stroke-width="0.68" stroke-linejoin="round"/><circle cx="247.66" cy="232.20" r="0.62" fill="#5fa980"/><circle cx="252.27" cy="232.20" r="0.62" fill="#5fa980"/><circle cx="256.88" cy="232.20" r="0.62" fill="#5fa980"/><circle cx="261.49" cy="190.60" r="0.62" fill="#5fa980"/><circle cx="266.10" cy="232.20" r="0.62" fill="#5fa980"/><circle cx="270.70" cy="232.20" r="0.62" fill="#5fa980"/><circle cx="275.31" cy="232.20" r="0.62" fill="#5fa980"/><circle cx="279.92" cy="232.20" r="0.62" fill="#5fa980"/><circle cx="284.53" cy="232.20" r="0.62" fill="#5fa980"/><circle cx="289.14" cy="232.20" r="0.62" fill="#5fa980"/><circle cx="293.74" cy="232.20" r="0.62" fill="#5fa980"/><circle cx="298.35" cy="232.20" r="0.62" fill="#5fa980"/><circle cx="302.96" cy="232.20" r="0.62" fill="#5fa980"/><circle cx="307.57" cy="232.20" r="0.62" fill="#5fa980"/><circle cx="312.18" cy="232.20" r="0.62" fill="#5fa980"/><circle cx="316.78" cy="232.20" r="0.62" fill="#5fa980"/><circle cx="321.39" cy="190.60" r="0.62" fill="#5fa980"/><circle cx="326.00" cy="190.60" r="0.62" fill="#5fa980"/><circle cx="330.61" cy="232.20" r="0.62" fill="#5fa980"/><circle cx="335.22" cy="190.60" r="0.62" fill="#5fa980"/><circle cx="339.82" cy="232.20" r="0.62" fill="#5fa980"/><circle cx="344.43" cy="232.20" r="0.62" fill="#5fa980"/><circle cx="349.04" cy="232.20" r="0.62" fill="#5fa980"/><circle cx="353.65" cy="232.20" r="0.62" fill="#5fa980"/><circle cx="358.26" cy="232.20" r="0.62" fill="#5fa980"/><circle cx="362.86" cy="232.20" r="0.62" fill="#5fa980"/><circle cx="367.47" cy="232.20" r="0.62" fill="#5fa980"/><circle cx="372.08" cy="232.20" r="0.62" fill="#5fa980"/><circle cx="376.69" cy="232.20" r="0.62" fill="#5fa980"/><circle cx="381.30" cy="232.20" r="0.62" fill="#5fa980"/><circle cx="385.90" cy="232.20" r="0.62" fill="#5fa980"/><circle cx="390.51" cy="232.20" r="0.62" fill="#5fa980"/><circle cx="395.12" cy="190.60" r="0.62" fill="#5fa980"/><circle cx="399.73" cy="190.60" r="0.62" fill="#5fa980"/><circle cx="404.34" cy="232.20" r="0.62" fill="#5fa980"/><circle cx="408.94" cy="190.60" r="0.62" fill="#5fa980"/><circle cx="413.55" cy="232.20" r="0.62" fill="#5fa980"/><circle cx="418.16" cy="190.60" r="0.62" fill="#5fa980"/><circle cx="422.77" cy="190.60" r="0.62" fill="#5fa980"/><circle cx="427.38" cy="190.60" r="0.62" fill="#5fa980"/><circle cx="431.98" cy="190.60" r="0.62" fill="#5fa980"/><circle cx="436.59" cy="190.60" r="0.62" fill="#5fa980"/><circle cx="441.20" cy="190.60" r="0.62" fill="#5fa980"/><circle cx="445.81" cy="190.60" r="0.62" fill="#5fa980"/><circle cx="450.42" cy="190.60" r="0.62" fill="#5fa980"/><circle cx="455.02" cy="190.60" r="0.62" fill="#5fa980"/><circle cx="459.63" cy="190.60" r="0.62" fill="#5fa980"/><circle cx="464.24" cy="232.20" r="0.62" fill="#5fa980"/><circle cx="468.85" cy="190.60" r="0.62" fill="#5fa980"/><circle cx="473.46" cy="190.60" r="0.62" fill="#5fa980"/><circle cx="478.06" cy="190.60" r="0.62" fill="#5fa980"/><circle cx="482.67" cy="190.60" r="0.62" fill="#5fa980"/><circle cx="487.28" cy="190.60" r="0.62" fill="#5fa980"/><circle cx="491.89" cy="190.60" r="0.62" fill="#5fa980"/><circle cx="496.50" cy="190.60" r="0.62" fill="#5fa980"/><circle cx="501.10" cy="190.60" r="0.62" fill="#5fa980"/><circle cx="505.71" cy="232.20" r="0.62" fill="#5fa980"/><circle cx="510.32" cy="232.20" r="0.62" fill="#5fa980"/><circle cx="514.93" cy="232.20" r="0.62" fill="#5fa980"/><circle cx="519.54" cy="232.20" r="0.62" fill="#5fa980"/><circle cx="524.14" cy="232.20" r="0.62" fill="#5fa980"/><circle cx="528.75" cy="232.20" r="0.62" fill="#5fa980"/><circle cx="533.36" cy="232.20" r="0.62" fill="#5fa980"/><circle cx="537.97" cy="232.20" r="0.62" fill="#5fa980"/><circle cx="542.58" cy="190.60" r="0.62" fill="#5fa980"/><circle cx="547.18" cy="190.60" r="0.62" fill="#5fa980"/><circle cx="551.79" cy="232.20" r="0.62" fill="#5fa980"/><circle cx="556.40" cy="190.60" r="0.62" fill="#5fa980"/><circle cx="561.01" cy="232.20" r="0.62" fill="#5fa980"/><circle cx="565.62" cy="232.20" r="0.62" fill="#5fa980"/><circle cx="570.22" cy="232.20" r="0.62" fill="#5fa980"/><circle cx="574.83" cy="232.20" r="0.62" fill="#5fa980"/><circle cx="579.44" cy="232.20" r="0.62" fill="#5fa980"/><circle cx="584.05" cy="232.20" r="0.62" fill="#5fa980"/><circle cx="588.66" cy="232.20" r="0.62" fill="#5fa980"/><circle cx="593.26" cy="232.20" r="0.62" fill="#5fa980"/><circle cx="597.87" cy="232.20" r="0.62" fill="#5fa980"/><circle cx="602.48" cy="232.20" r="0.62" fill="#5fa980"/><circle cx="607.09" cy="232.20" r="0.62" fill="#5fa980"/><circle cx="611.70" cy="190.60" r="0.62" fill="#5fa980"/><circle cx="616.30" cy="190.60" r="0.62" fill="#5fa980"/><circle cx="620.91" cy="190.60" r="0.62" fill="#5fa980"/><circle cx="625.52" cy="190.60" r="0.62" fill="#5fa980"/><circle cx="630.13" cy="190.60" r="0.62" fill="#5fa980"/><circle cx="634.74" cy="232.20" r="0.62" fill="#5fa980"/><circle cx="639.34" cy="232.20" r="0.62" fill="#5fa980"/><circle cx="643.95" cy="232.20" r="0.62" fill="#5fa980"/><circle cx="648.56" cy="232.20" r="0.62" fill="#5fa980"/><circle cx="653.17" cy="190.60" r="0.62" fill="#5fa980"/><circle cx="657.78" cy="232.20" r="0.62" fill="#5fa980"/><circle cx="662.38" cy="232.20" r="0.62" fill="#5fa980"/><circle cx="666.99" cy="232.20" r="0.62" fill="#5fa980"/><circle cx="671.60" cy="190.60" r="0.62" fill="#5fa980"/><circle cx="676.21" cy="190.60" r="0.62" fill="#5fa980"/><circle cx="680.82" cy="232.20" r="0.62" fill="#5fa980"/><circle cx="685.42" cy="232.20" r="0.62" fill="#5fa980"/><circle cx="690.03" cy="232.20" r="0.62" fill="#5fa980"/><circle cx="694.64" cy="232.20" r="0.62" fill="#5fa980"/><circle cx="699.25" cy="232.20" r="0.62" fill="#5fa980"/><circle cx="703.86" cy="232.20" r="0.62" fill="#5fa980"/><circle cx="708.46" cy="190.60" r="0.62" fill="#5fa980"/><circle cx="713.07" cy="190.60" r="0.62" fill="#5fa980"/><circle cx="717.68" cy="232.20" r="0.62" fill="#5fa980"/><circle cx="722.29" cy="190.60" r="0.62" fill="#5fa980"/><circle cx="726.90" cy="232.20" r="0.62" fill="#5fa980"/><circle cx="731.50" cy="232.20" r="0.62" fill="#5fa980"/><circle cx="736.11" cy="232.20" r="0.62" fill="#5fa980"/><circle cx="740.72" cy="232.20" r="0.62" fill="#5fa980"/><circle cx="745.33" cy="232.20" r="0.62" fill="#5fa980"/><circle cx="749.94" cy="190.60" r="0.62" fill="#5fa980"/><circle cx="754.54" cy="190.60" r="0.62" fill="#5fa980"/><circle cx="759.15" cy="232.20" r="0.62" fill="#5fa980"/><circle cx="763.76" cy="232.20" r="0.62" fill="#5fa980"/><circle cx="768.37" cy="232.20" r="0.62" fill="#5fa980"/><circle cx="772.98" cy="232.20" r="0.62" fill="#5fa980"/><circle cx="777.58" cy="232.20" r="0.62" fill="#5fa980"/><circle cx="782.19" cy="232.20" r="0.62" fill="#5fa980"/><circle cx="786.80" cy="232.20" r="0.62" fill="#5fa980"/><circle cx="791.41" cy="232.20" r="0.62" fill="#5fa980"/><circle cx="796.02" cy="232.20" r="0.62" fill="#5fa980"/><circle cx="800.62" cy="232.20" r="0.62" fill="#5fa980"/></svg>
<div class="b" style="left:221.00px;top:271.50px;width:600.00px;height:99.80px;background:#ffffff;border-radius:3px;"></div>
<span class="t" style="top:282.93px;font-size:5.6px;font-weight:700;color:#2c3546;font-family:'Liberation Sans',Arial,sans-serif;letter-spacing:0.02px;left:225.30px;">Min(source.bytes)</span>
<svg class="b" style="left:0;top:0" width="828" height="473" viewBox="0 0 828 473" font-family="Liberation Sans,Arial,sans-serif"><path d="M243.2 297.50H801.6" stroke="#eef0f2" stroke-width="0.6"/><text x="241" y="299.05" text-anchor="end" font-size="4.6" fill="#5d6675">54</text><path d="M243.2 304.38H801.6" stroke="#eef0f2" stroke-width="0.6"/><text x="241" y="305.93" text-anchor="end" font-size="4.6" fill="#5d6675">52</text><path d="M243.2 311.27H801.6" stroke="#eef0f2" stroke-width="0.6"/><text x="241" y="312.82" text-anchor="end" font-size="4.6" fill="#5d6675">50</text><path d="M243.2 318.15H801.6" stroke="#eef0f2" stroke-width="0.6"/><text x="241" y="319.70" text-anchor="end" font-size="4.6" fill="#5d6675">48</text><path d="M243.2 325.03H801.6" stroke="#eef0f2" stroke-width="0.6"/><text x="241" y="326.58" text-anchor="end" font-size="4.6" fill="#5d6675">46</text><path d="M243.2 331.92H801.6" stroke="#eef0f2" stroke-width="0.6"/><text x="241" y="333.47" text-anchor="end" font-size="4.6" fill="#5d6675">44</text><path d="M243.2 338.80H801.6" stroke="#eef0f2" stroke-width="0.6"/><text x="241" y="340.35" text-anchor="end" font-size="4.6" fill="#5d6675">42</text><path d="M326.0 343.90V347.10" stroke="#dde1e6" stroke-width="0.6"/><text x="326.0" y="353.40" text-anchor="middle" font-size="4.4" fill="#5d6675">8 Jun</text><path d="M418.16 343.90V347.10" stroke="#dde1e6" stroke-width="0.6"/><text x="418.16" y="353.40" text-anchor="middle" font-size="4.4" fill="#5d6675">18:00</text><path d="M510.32 343.90V347.10" stroke="#dde1e6" stroke-width="0.6"/><text x="510.32" y="353.40" text-anchor="middle" font-size="4.4" fill="#5d6675">18:05</text><path d="M602.48 343.90V347.10" stroke="#dde1e6" stroke-width="0.6"/><text x="602.48" y="353.40" text-anchor="middle" font-size="4.4" fill="#5d6675">18:10</text><path d="M694.64 343.90V347.10" stroke="#dde1e6" stroke-width="0.6"/><text x="694.64" y="353.40" text-anchor="middle" font-size="4.4" fill="#5d6675">18:15</text><path d="M786.8 343.90V347.10" stroke="#dde1e6" stroke-width="0.6"/><text x="786.8" y="353.40" text-anchor="middle" font-size="4.4" fill="#5d6675">18:20</text><polyline points="247.66,297.50 252.27,297.50 256.88,297.50 261.49,297.50 266.10,297.50 270.70,297.50 275.31,297.50 279.92,297.50 284.53,297.50 289.14,297.50 293.74,297.50 298.35,297.50 302.96,297.50 307.57,297.50 312.18,297.50 316.78,297.50 321.39,297.50 326.00,297.50 330.61,297.50 335.22,297.50 339.82,297.50 344.43,297.50 349.04,297.50 353.65,297.50 358.26,297.50 362.86,297.50 367.47,297.50 372.08,297.50 376.69,297.50 381.30,297.50 385.90,297.50 390.51,297.50 395.12,297.50 399.73,297.50 404.34,297.50 408.94,297.50 413.55,297.50 418.16,297.50 422.77,297.50 427.38,297.50 431.98,297.50 436.59,297.50 441.20,297.50 445.81,297.50 450.42,297.50 455.02,297.50 459.63,297.50 464.24,297.50 468.85,297.50 473.46,297.50 478.06,297.50 482.67,297.50 487.28,297.50 491.89,297.50 496.50,297.50 501.10,297.50 505.71,297.50 510.32,297.50 514.93,338.80 519.54,297.50 524.14,297.50 528.75,297.50 533.36,297.50 537.97,297.50 542.58,297.50 547.18,297.50 551.79,338.80 556.40,297.50 561.01,297.50 565.62,297.50 570.22,297.50 574.83,297.50 579.44,297.50 584.05,297.50 588.66,297.50 593.26,297.50 597.87,297.50 602.48,297.50 607.09,297.50 611.70,297.50 616.30,297.50 620.91,297.50 625.52,297.50 630.13,297.50 634.74,297.50 639.34,297.50 643.95,297.50 648.56,297.50 653.17,297.50 657.78,297.50 662.38,297.50 666.99,297.50 671.60,297.50 676.21,297.50 680.82,297.50 685.42,297.50 690.03,297.50 694.64,297.50 699.25,297.50 703.86,297.50 708.46,297.50 713.07,297.50 717.68,297.50 722.29,297.50 726.90,297.50 731.50,297.50 736.11,297.50 740.72,297.50 745.33,297.50 749.94,297.50 754.54,297.50 759.15,297.50 763.76,297.50 768.37,297.50 772.98,338.80 777.58,338.80 782.19,338.80 786.80,338.80 791.41,297.50 796.02,297.50 800.62,297.50" fill="none" stroke="#ffffff" stroke-width="1.7" stroke-linejoin="round"/><polyline points="247.66,297.50 252.27,297.50 256.88,297.50 261.49,297.50 266.10,297.50 270.70,297.50 275.31,297.50 279.92,297.50 284.53,297.50 289.14,297.50 293.74,297.50 298.35,297.50 302.96,297.50 307.57,297.50 312.18,297.50 316.78,297.50 321.39,297.50 326.00,297.50 330.61,297.50 335.22,297.50 339.82,297.50 344.43,297.50 349.04,297.50 353.65,297.50 358.26,297.50 362.86,297.50 367.47,297.50 372.08,297.50 376.69,297.50 381.30,297.50 385.90,297.50 390.51,297.50 395.12,297.50 399.73,297.50 404.34,297.50 408.94,297.50 413.55,297.50 418.16,297.50 422.77,297.50 427.38,297.50 431.98,297.50 436.59,297.50 441.20,297.50 445.81,297.50 450.42,297.50 455.02,297.50 459.63,297.50 464.24,297.50 468.85,297.50 473.46,297.50 478.06,297.50 482.67,297.50 487.28,297.50 491.89,297.50 496.50,297.50 501.10,297.50 505.71,297.50 510.32,297.50 514.93,338.80 519.54,297.50 524.14,297.50 528.75,297.50 533.36,297.50 537.97,297.50 542.58,297.50 547.18,297.50 551.79,338.80 556.40,297.50 561.01,297.50 565.62,297.50 570.22,297.50 574.83,297.50 579.44,297.50 584.05,297.50 588.66,297.50 593.26,297.50 597.87,297.50 602.48,297.50 607.09,297.50 611.70,297.50 616.30,297.50 620.91,297.50 625.52,297.50 630.13,297.50 634.74,297.50 639.34,297.50 643.95,297.50 648.56,297.50 653.17,297.50 657.78,297.50 662.38,297.50 666.99,297.50 671.60,297.50 676.21,297.50 680.82,297.50 685.42,297.50 690.03,297.50 694.64,297.50 699.25,297.50 703.86,297.50 708.46,297.50 713.07,297.50 717.68,297.50 722.29,297.50 726.90,297.50 731.50,297.50 736.11,297.50 740.72,297.50 745.33,297.50 749.94,297.50 754.54,297.50 759.15,297.50 763.76,297.50 768.37,297.50 772.98,338.80 777.58,338.80 782.19,338.80 786.80,338.80 791.41,297.50 796.02,297.50 800.62,297.50" fill="none" stroke="#5fa980" stroke-width="0.68" stroke-linejoin="round"/><circle cx="247.66" cy="297.50" r="0.62" fill="#5fa980"/><circle cx="252.27" cy="297.50" r="0.62" fill="#5fa980"/><circle cx="256.88" cy="297.50" r="0.62" fill="#5fa980"/><circle cx="261.49" cy="297.50" r="0.62" fill="#5fa980"/><circle cx="266.10" cy="297.50" r="0.62" fill="#5fa980"/><circle cx="270.70" cy="297.50" r="0.62" fill="#5fa980"/><circle cx="275.31" cy="297.50" r="0.62" fill="#5fa980"/><circle cx="279.92" cy="297.50" r="0.62" fill="#5fa980"/><circle cx="284.53" cy="297.50" r="0.62" fill="#5fa980"/><circle cx="289.14" cy="297.50" r="0.62" fill="#5fa980"/><circle cx="293.74" cy="297.50" r="0.62" fill="#5fa980"/><circle cx="298.35" cy="297.50" r="0.62" fill="#5fa980"/><circle cx="302.96" cy="297.50" r="0.62" fill="#5fa980"/><circle cx="307.57" cy="297.50" r="0.62" fill="#5fa980"/><circle cx="312.18" cy="297.50" r="0.62" fill="#5fa980"/><circle cx="316.78" cy="297.50" r="0.62" fill="#5fa980"/><circle cx="321.39" cy="297.50" r="0.62" fill="#5fa980"/><circle cx="326.00" cy="297.50" r="0.62" fill="#5fa980"/><circle cx="330.61" cy="297.50" r="0.62" fill="#5fa980"/><circle cx="335.22" cy="297.50" r="0.62" fill="#5fa980"/><circle cx="339.82" cy="297.50" r="0.62" fill="#5fa980"/><circle cx="344.43" cy="297.50" r="0.62" fill="#5fa980"/><circle cx="349.04" cy="297.50" r="0.62" fill="#5fa980"/><circle cx="353.65" cy="297.50" r="0.62" fill="#5fa980"/><circle cx="358.26" cy="297.50" r="0.62" fill="#5fa980"/><circle cx="362.86" cy="297.50" r="0.62" fill="#5fa980"/><circle cx="367.47" cy="297.50" r="0.62" fill="#5fa980"/><circle cx="372.08" cy="297.50" r="0.62" fill="#5fa980"/><circle cx="376.69" cy="297.50" r="0.62" fill="#5fa980"/><circle cx="381.30" cy="297.50" r="0.62" fill="#5fa980"/><circle cx="385.90" cy="297.50" r="0.62" fill="#5fa980"/><circle cx="390.51" cy="297.50" r="0.62" fill="#5fa980"/><circle cx="395.12" cy="297.50" r="0.62" fill="#5fa980"/><circle cx="399.73" cy="297.50" r="0.62" fill="#5fa980"/><circle cx="404.34" cy="297.50" r="0.62" fill="#5fa980"/><circle cx="408.94" cy="297.50" r="0.62" fill="#5fa980"/><circle cx="413.55" cy="297.50" r="0.62" fill="#5fa980"/><circle cx="418.16" cy="297.50" r="0.62" fill="#5fa980"/><circle cx="422.77" cy="297.50" r="0.62" fill="#5fa980"/><circle cx="427.38" cy="297.50" r="0.62" fill="#5fa980"/><circle cx="431.98" cy="297.50" r="0.62" fill="#5fa980"/><circle cx="436.59" cy="297.50" r="0.62" fill="#5fa980"/><circle cx="441.20" cy="297.50" r="0.62" fill="#5fa980"/><circle cx="445.81" cy="297.50" r="0.62" fill="#5fa980"/><circle cx="450.42" cy="297.50" r="0.62" fill="#5fa980"/><circle cx="455.02" cy="297.50" r="0.62" fill="#5fa980"/><circle cx="459.63" cy="297.50" r="0.62" fill="#5fa980"/><circle cx="464.24" cy="297.50" r="0.62" fill="#5fa980"/><circle cx="468.85" cy="297.50" r="0.62" fill="#5fa980"/><circle cx="473.46" cy="297.50" r="0.62" fill="#5fa980"/><circle cx="478.06" cy="297.50" r="0.62" fill="#5fa980"/><circle cx="482.67" cy="297.50" r="0.62" fill="#5fa980"/><circle cx="487.28" cy="297.50" r="0.62" fill="#5fa980"/><circle cx="491.89" cy="297.50" r="0.62" fill="#5fa980"/><circle cx="496.50" cy="297.50" r="0.62" fill="#5fa980"/><circle cx="501.10" cy="297.50" r="0.62" fill="#5fa980"/><circle cx="505.71" cy="297.50" r="0.62" fill="#5fa980"/><circle cx="510.32" cy="297.50" r="0.62" fill="#5fa980"/><circle cx="514.93" cy="338.80" r="0.62" fill="#5fa980"/><circle cx="519.54" cy="297.50" r="0.62" fill="#5fa980"/><circle cx="524.14" cy="297.50" r="0.62" fill="#5fa980"/><circle cx="528.75" cy="297.50" r="0.62" fill="#5fa980"/><circle cx="533.36" cy="297.50" r="0.62" fill="#5fa980"/><circle cx="537.97" cy="297.50" r="0.62" fill="#5fa980"/><circle cx="542.58" cy="297.50" r="0.62" fill="#5fa980"/><circle cx="547.18" cy="297.50" r="0.62" fill="#5fa980"/><circle cx="551.79" cy="338.80" r="0.62" fill="#5fa980"/><circle cx="556.40" cy="297.50" r="0.62" fill="#5fa980"/><circle cx="561.01" cy="297.50" r="0.62" fill="#5fa980"/><circle cx="565.62" cy="297.50" r="0.62" fill="#5fa980"/><circle cx="570.22" cy="297.50" r="0.62" fill="#5fa980"/><circle cx="574.83" cy="297.50" r="0.62" fill="#5fa980"/><circle cx="579.44" cy="297.50" r="0.62" fill="#5fa980"/><circle cx="584.05" cy="297.50" r="0.62" fill="#5fa980"/><circle cx="588.66" cy="297.50" r="0.62" fill="#5fa980"/><circle cx="593.26" cy="297.50" r="0.62" fill="#5fa980"/><circle cx="597.87" cy="297.50" r="0.62" fill="#5fa980"/><circle cx="602.48" cy="297.50" r="0.62" fill="#5fa980"/><circle cx="607.09" cy="297.50" r="0.62" fill="#5fa980"/><circle cx="611.70" cy="297.50" r="0.62" fill="#5fa980"/><circle cx="616.30" cy="297.50" r="0.62" fill="#5fa980"/><circle cx="620.91" cy="297.50" r="0.62" fill="#5fa980"/><circle cx="625.52" cy="297.50" r="0.62" fill="#5fa980"/><circle cx="630.13" cy="297.50" r="0.62" fill="#5fa980"/><circle cx="634.74" cy="297.50" r="0.62" fill="#5fa980"/><circle cx="639.34" cy="297.50" r="0.62" fill="#5fa980"/><circle cx="643.95" cy="297.50" r="0.62" fill="#5fa980"/><circle cx="648.56" cy="297.50" r="0.62" fill="#5fa980"/><circle cx="653.17" cy="297.50" r="0.62" fill="#5fa980"/><circle cx="657.78" cy="297.50" r="0.62" fill="#5fa980"/><circle cx="662.38" cy="297.50" r="0.62" fill="#5fa980"/><circle cx="666.99" cy="297.50" r="0.62" fill="#5fa980"/><circle cx="671.60" cy="297.50" r="0.62" fill="#5fa980"/><circle cx="676.21" cy="297.50" r="0.62" fill="#5fa980"/><circle cx="680.82" cy="297.50" r="0.62" fill="#5fa980"/><circle cx="685.42" cy="297.50" r="0.62" fill="#5fa980"/><circle cx="690.03" cy="297.50" r="0.62" fill="#5fa980"/><circle cx="694.64" cy="297.50" r="0.62" fill="#5fa980"/><circle cx="699.25" cy="297.50" r="0.62" fill="#5fa980"/><circle cx="703.86" cy="297.50" r="0.62" fill="#5fa980"/><circle cx="708.46" cy="297.50" r="0.62" fill="#5fa980"/><circle cx="713.07" cy="297.50" r="0.62" fill="#5fa980"/><circle cx="717.68" cy="297.50" r="0.62" fill="#5fa980"/><circle cx="722.29" cy="297.50" r="0.62" fill="#5fa980"/><circle cx="726.90" cy="297.50" r="0.62" fill="#5fa980"/><circle cx="731.50" cy="297.50" r="0.62" fill="#5fa980"/><circle cx="736.11" cy="297.50" r="0.62" fill="#5fa980"/><circle cx="740.72" cy="297.50" r="0.62" fill="#5fa980"/><circle cx="745.33" cy="297.50" r="0.62" fill="#5fa980"/><circle cx="749.94" cy="297.50" r="0.62" fill="#5fa980"/><circle cx="754.54" cy="297.50" r="0.62" fill="#5fa980"/><circle cx="759.15" cy="297.50" r="0.62" fill="#5fa980"/><circle cx="763.76" cy="297.50" r="0.62" fill="#5fa980"/><circle cx="768.37" cy="297.50" r="0.62" fill="#5fa980"/><circle cx="772.98" cy="338.80" r="0.62" fill="#5fa980"/><circle cx="777.58" cy="338.80" r="0.62" fill="#5fa980"/><circle cx="782.19" cy="338.80" r="0.62" fill="#5fa980"/><circle cx="786.80" cy="338.80" r="0.62" fill="#5fa980"/><circle cx="791.41" cy="297.50" r="0.62" fill="#5fa980"/><circle cx="796.02" cy="297.50" r="0.62" fill="#5fa980"/><circle cx="800.62" cy="297.50" r="0.62" fill="#5fa980"/></svg>
<div class="b" style="left:221.00px;top:379.00px;width:600.20px;height:29.80px;background:#ffffff;border-radius:2.5px;overflow:hidden;"></div>
<div class="b" style="left:221.00px;top:394.10px;width:600.20px;height:14.70px;background:#fafbfb;border-radius:0px;border-radius:0 0 2.5px 2.5px;"></div>
<div class="b" style="left:221.00px;top:393.10px;width:600.20px;height:1.20px;background:#e2e6ea;border-radius:0px;"></div>
<div class="b" style="left:232.20px;top:379.00px;width:0.60px;height:29.80px;background:#eceff2;border-radius:0px;"></div>
<div class="b" style="left:443.20px;top:379.00px;width:0.60px;height:29.80px;background:#eceff2;border-radius:0px;"></div>
<div class="b" style="left:646.20px;top:379.00px;width:0.60px;height:29.80px;background:#eceff2;border-radius:0px;"></div>
<div class="b" style="left:224.20px;top:399.20px;width:4.70px;height:4.70px;background:#2a3343;border-radius:0.5px;"></div>
<span class="t" style="top:383.93px;font-size:5.6px;font-weight:400;color:#303946;font-family:'Liberation Mono','DejaVu Sans Mono',monospace;left:338.00px;transform:translateX(-50%);">MIN(destination.port)</span>
<span class="t" style="top:383.93px;font-size:5.6px;font-weight:400;color:#303946;font-family:'Liberation Mono','DejaVu Sans Mono',monospace;left:545.00px;transform:translateX(-50%);">MIN(network.packets)</span>
<span class="t" style="top:383.93px;font-size:5.6px;font-weight:400;color:#303946;font-family:'Liberation Mono','DejaVu Sans Mono',monospace;left:733.80px;transform:translateX(-50%);">MIN(source.bytes)</span>
<span class="t" style="top:399.29px;font-size:5.3px;font-weight:400;color:#303946;font-family:'Liberation Mono','DejaVu Sans Mono',monospace;right:387.80px;">53</span>
<span class="t" style="top:399.29px;font-size:5.3px;font-weight:400;color:#303946;font-family:'Liberation Mono','DejaVu Sans Mono',monospace;right:185.30px;">1</span>
<span class="t" style="top:399.29px;font-size:5.3px;font-weight:400;color:#303946;font-family:'Liberation Mono','DejaVu Sans Mono',monospace;right:10.00px;">42</span>
<span class="t" style="top:424.77px;font-size:5.15px;font-weight:400;color:#6d7583;font-family:'Liberation Mono','DejaVu Sans Mono',monospace;left:220.80px;">Examined 71,417 rows (&lt;343ms)</span>
<span class="t" style="top:424.77px;font-size:5.15px;font-weight:400;color:#6d7583;font-family:'Liberation Mono','DejaVu Sans Mono',monospace;right:7.30px;">Jun 8, 17:50:59 – Jun 8, 18:20:59 (15 secs resolution)</span>
</div></body></html>
